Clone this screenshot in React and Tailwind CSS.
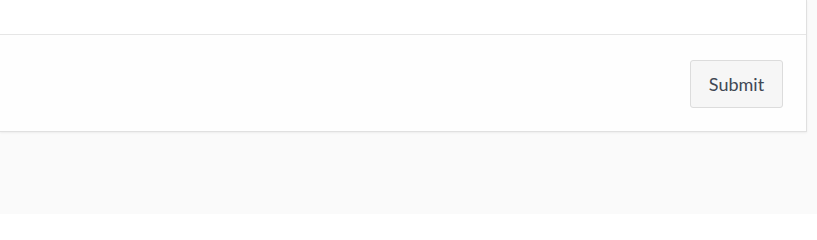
export default function App() {
  return (
    <div className="w-[817px] h-[214px] bg-[#fafafa] overflow-hidden" style={{ fontFamily: 'Lato, "Liberation Sans", sans-serif' }}>
      <div className="w-[807px] bg-white border-r border-b border-[#e0e0e0] shadow-[0_1px_2px_rgba(0,0,0,0.06)]">
        <div className="h-[34px] bg-white" />
        <div className="border-t border-[#e6e6e6] bg-[#fefefe] h-[97px] flex items-center justify-end pr-[23px] pt-[1px]">
          <button className="w-[93px] h-[48px] pt-[2px] rounded-[3px] border border-[#dcdcdc] bg-[#f6f6f6] text-[#414854] text-[18px]">
            Submit
          </button>
        </div>
      </div>
    </div>
  );
}
